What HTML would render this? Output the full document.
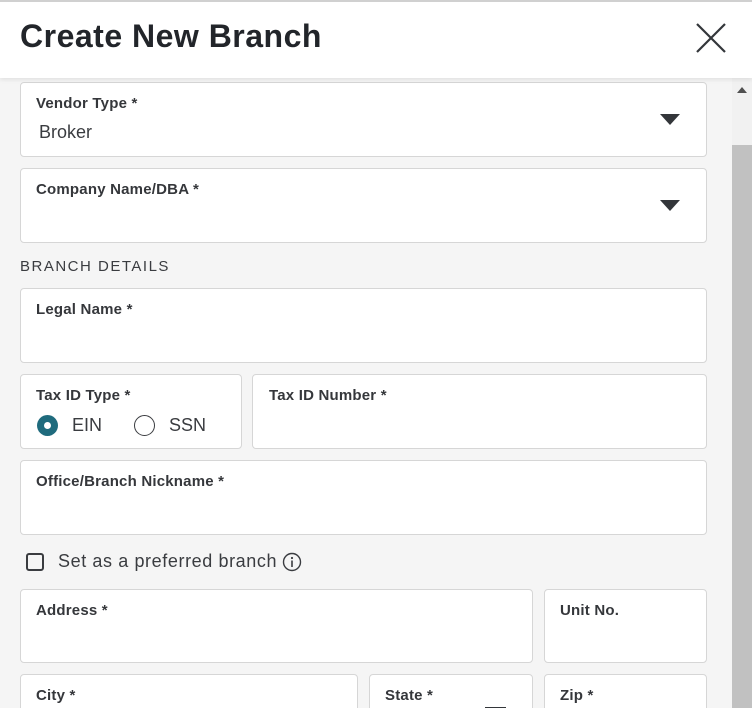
<!DOCTYPE html>
<html><head><style>
*{box-sizing:border-box;margin:0;padding:0}
html{width:752px;height:708px;overflow:hidden}
body{width:752px;height:708px;overflow:hidden;background:#f5f5f5;font-family:"Liberation Sans",sans-serif;color:#2c2e33;position:relative}
.hdr{position:absolute;left:0;top:0;width:752px;height:78px;background:#fff;border-top:2px solid #d0d0d0;box-shadow:0 2px 4px rgba(0,0,0,.08);z-index:2}
.hdr h1{position:absolute;left:20px;top:16px;font-size:32px;font-weight:bold;color:#22252a;letter-spacing:0.5px}
.box{position:absolute;background:#fff;border:1px solid #d6d6d6;border-radius:4px}
.lbl{position:absolute;left:15px;top:12px;font-size:15px;font-weight:bold;color:#35373b;letter-spacing:0.2px}
.val{position:absolute;left:18px;top:39px;font-size:18px;color:#3a3c40}
.tri{position:absolute;width:0;height:0;border-left:10px solid transparent;border-right:10px solid transparent;border-top:11px solid #33363a}
.sb{position:absolute;left:732px;top:78px;width:20px;height:630px;background:#f1f1f1}
.thumb{position:absolute;left:732px;top:145px;width:20px;height:563px;background:#c1c1c1}
</style></head><body>
<div class="hdr"><h1>Create New Branch</h1>
<svg style="position:absolute;left:695px;top:20px" width="32" height="32" viewBox="0 0 32 32"><path d="M2 2L30 30M30 2L2 30" stroke="#33363a" stroke-width="2.2" fill="none"/></svg></div>
<div class="sb"></div><div class="thumb"></div>
<div style="position:absolute;left:737px;top:87px;width:0;height:0;border-left:5px solid transparent;border-right:5px solid transparent;border-bottom:6px solid #505050"></div>

<div class="box" style="left:20px;top:82px;width:687px;height:75px"><div class="lbl">Vendor Type *</div><div class="val">Broker</div><div class="tri" style="left:639px;top:31px"></div></div>
<div class="box" style="left:20px;top:168px;width:687px;height:75px"><div class="lbl">Company Name/DBA *</div><div class="tri" style="left:639px;top:31px"></div></div>
<div style="position:absolute;left:20px;top:258px;font-size:15px;letter-spacing:1.5px;color:#3a3c40">BRANCH DETAILS</div>
<div class="box" style="left:20px;top:288px;width:687px;height:75px"><div class="lbl">Legal Name *</div></div>
<div class="box" style="left:20px;top:374px;width:222px;height:75px"><div class="lbl">Tax ID Type *</div>
<div style="position:absolute;left:16px;top:40px;width:21px;height:21px;border-radius:50%;background:#1f6b7d"><div style="position:absolute;left:7px;top:7px;width:7px;height:7px;border-radius:50%;background:#fff"></div></div>
<div style="position:absolute;left:51px;top:40px;font-size:18px;color:#3a3c40">EIN</div>
<div style="position:absolute;left:113px;top:40px;width:21px;height:21px;border-radius:50%;border:1.5px solid #3a3c40"></div>
<div style="position:absolute;left:148px;top:40px;font-size:18px;color:#3a3c40">SSN</div></div>
<div class="box" style="left:252px;top:374px;width:455px;height:75px"><div class="lbl" style="left:16px">Tax ID Number *</div></div>
<div class="box" style="left:20px;top:460px;width:687px;height:75px"><div class="lbl">Office/Branch Nickname *</div></div>
<div style="position:absolute;left:26px;top:553px;width:18px;height:18px;border:2px solid #3a3c40;border-radius:3px"></div>
<div style="position:absolute;left:58px;top:551px;font-size:18px;color:#3a3c40;letter-spacing:0.6px">Set as a preferred branch</div>
<svg style="position:absolute;left:282px;top:552px" width="20" height="20" viewBox="0 0 20 20"><circle cx="10" cy="10" r="8.5" fill="none" stroke="#3a3c40" stroke-width="1.4"/><circle cx="10" cy="6" r="1.1" fill="#3a3c40"/><path d="M10 8.5V15" stroke="#3a3c40" stroke-width="1.6"/></svg>
<div class="box" style="left:20px;top:589px;width:513px;height:74px"><div class="lbl">Address *</div></div>
<div class="box" style="left:544px;top:589px;width:163px;height:74px"><div class="lbl">Unit No.</div></div>
<div class="box" style="left:20px;top:674px;width:338px;height:60px"><div class="lbl">City *</div></div>
<div class="box" style="left:369px;top:674px;width:164px;height:60px"><div class="lbl">State *</div><div style="position:absolute;left:115px;top:32px;width:21px;height:3px;background:#33363a"></div></div>
<div class="box" style="left:544px;top:674px;width:163px;height:60px"><div class="lbl">Zip *</div></div>
</body></html>
